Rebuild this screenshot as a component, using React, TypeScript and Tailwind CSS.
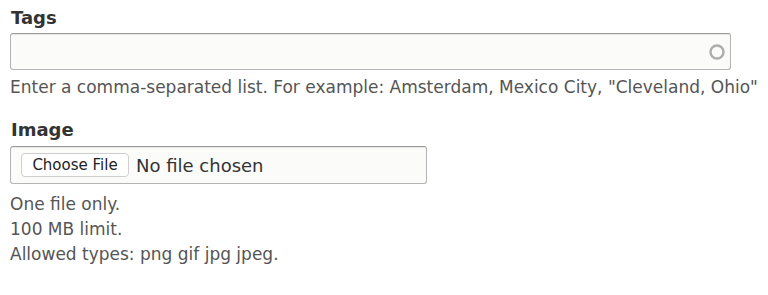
export default function App() {
  return (
    <div className="w-[768px] h-[295px] bg-white px-[10px] pt-[7px] font-['DejaVu_Sans',sans-serif] text-[#555]">
      {/* Tags field */}
      <label className="block text-[18px] leading-[22px] font-bold text-[#333] pl-[1px]">Tags</label>
      <div className="mt-[4px] w-[721px] h-[37px] rounded-[3px] border border-[#b4b4b4] border-t-[#999] bg-[#fbfbf9] shadow-[inset_0_1px_1px_rgba(0,0,0,0.08)] flex items-center justify-end pr-[4px]">
        <svg width="18" height="18" viewBox="0 0 18 18">
          <circle cx="9" cy="9" r="6.5" fill="none" stroke="#adadad" strokeWidth="2.4" />
        </svg>
      </div>
      <p className="mt-[6px] text-[17px] leading-[22px]">
        Enter a comma-separated list. For example: Amsterdam, Mexico City, "Cleveland, Ohio"
      </p>

      {/* Image field */}
      <label className="block mt-[21px] text-[18px] leading-[22px] font-bold text-[#333] pl-[1px]">Image</label>
      <div className="mt-[5px] w-[417px] h-[38px] rounded-[3px] border border-[#b4b4b4] border-t-[#999] bg-[#fbfbf9] shadow-[inset_0_1px_1px_rgba(0,0,0,0.08)] flex items-center pl-[10px] gap-[7px]">
        <button className="h-[24px] w-[108px] rounded-[4px] border border-[#cfcfcf] bg-white text-[15px] text-[#222] leading-none">
          Choose File
        </button>
        <span className="text-[18px] text-[#333]">No file chosen</span>
      </div>
      <div className="mt-[8px] text-[17px] leading-[25px]">
        <p>One file only.</p>
        <p>100 MB limit.</p>
        <p>Allowed types: png gif jpg jpeg.</p>
      </div>
    </div>
  );
}
